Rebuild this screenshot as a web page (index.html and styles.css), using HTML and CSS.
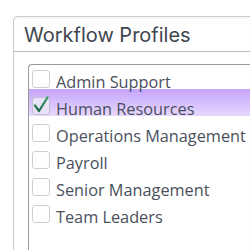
FILE: index.html
```html
<!DOCTYPE html>
<html>
<head>
<meta charset="utf-8">
<link rel="stylesheet" href="styles.css">
</head>
<body>
<div class="panel">
  <div class="panel-header">Workflow Profiles</div>
  <div class="panel-body">
    <div class="listbox">
      <div class="rows">
        <div class="row"><span class="cb"></span><span class="label">Admin Support</span></div>
        <div class="row selected"><span class="cb checked"><svg class="tick" width="18" height="18" viewBox="0 0 18 18"><defs><linearGradient id="g" x1="0" y1="0" x2="0" y2="1"><stop offset="0" stop-color="#36a06a"/><stop offset="1" stop-color="#1f6a4a"/></linearGradient></defs><path d="M3 9.5 L7 15 L15.5 1.5" fill="none" stroke="url(#g)" stroke-width="2.2" stroke-linecap="round" stroke-linejoin="round"/></svg></span><span class="label">Human Resources</span></div>
        <div class="row"><span class="cb"></span><span class="label">Operations Management</span></div>
        <div class="row"><span class="cb"></span><span class="label">Payroll</span></div>
        <div class="row"><span class="cb"></span><span class="label">Senior Management</span></div>
        <div class="row"><span class="cb"></span><span class="label">Team Leaders</span></div>
      </div>
    </div>
  </div>
</div>
</body>
</html>
```

FILE: styles.css
```css
html, body {
  margin: 0;
  padding: 0;
  background: #fff;
  overflow: hidden;
}
.panel {
  margin: 16px 0 0 13px;
  border: 1px solid #cbcbcb;
  border-right: none;
  border-bottom: none;
  border-radius: 5px 0 0 0;
  height: 233px;
  box-shadow: inset 0 2px 2px rgba(0,0,0,0.04);
}
.panel-header {
  height: 35px;
  box-sizing: border-box;
  padding: 6px 0 0 10px;
  font-family: "Inter", "Lato", sans-serif;
  font-size: 20px;
  line-height: 24px;
  color: #414650;
  border-bottom: 1px solid #bdbdbd;
}
.panel-body {
  padding: 12px 0 0 14px;
}
.listbox {
  border: 1px solid #9a9a9a;
  border-right: none;
  border-bottom: none;
  border-radius: 4px 0 0 0;
  height: 185px;
  overflow: hidden;
}
.rows {
  margin-top: -3px;
}
.row {
  height: 27px;
  display: flex;
  align-items: flex-start;
  padding-left: 3px;
  font-family: "Open Sans", sans-serif;
  font-size: 16.3px;
  color: #4a505c;
  white-space: nowrap;
}
.row.selected {
  background: linear-gradient(#c5a4fb, #e7d9fe);
}
.cb {
  width: 18px;
  height: 18px;
  margin-top: 8px;
  box-sizing: border-box;
  border: 1px solid #cfcfcf;
  border-radius: 3px;
  background: #fff;
  flex: none;
  position: relative;
}
.cb.checked {
  background: #e9e1f6;
  border-color: #c4bcd2;
}
.tick {
  position: absolute;
  left: -1px;
  top: -2px;
}
.label {
  margin-left: 6px;
  line-height: 22px;
  padding-top: 9px;
}
```
